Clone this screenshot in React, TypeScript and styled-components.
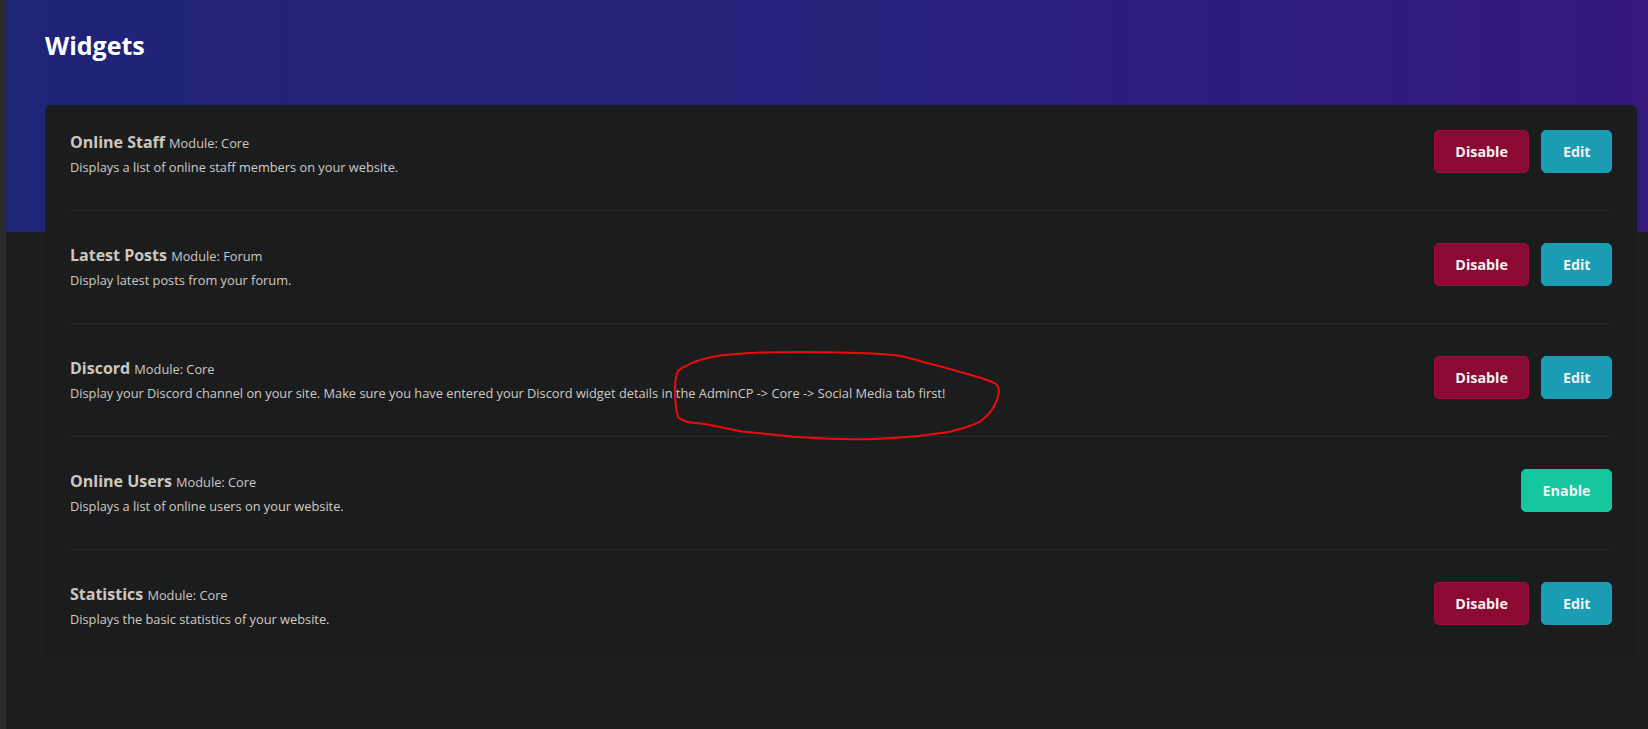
import React from "react";
import styled, { createGlobalStyle } from "styled-components";

const GlobalStyle = createGlobalStyle`
  html, body {
    margin: 0;
    padding: 0;
    background: #1d1e1e;
  }
  body {
    font-family: "Open Sans", "Noto Sans", sans-serif;
  }
  * { box-sizing: border-box; }
`;

const Page = styled.div`
  position: relative;
  display: flex;
  min-height: 729px;
  background: #1d1e1e;
`;

const SideStrip = styled.div`
  width: 6px;
  flex: none;
  background: #2a2c2b;
`;

const Main = styled.main`
  flex: 1;
  display: flex;
  flex-direction: column;
`;

const Hero = styled.header`
  height: 232px;
  padding: 29.6px 11px 0 39px;
  background: linear-gradient(90deg, #1e2477 0%, #27207a 55%, #34187a 100%);
`;

const PageTitle = styled.h1`
  margin: 0;
  font-size: 25px;
  line-height: 30px;
  font-weight: 700;
  color: #ffffff;
`;

const Content = styled.section`
  margin-top: -127px;
  padding: 0 11px 0 39px;
`;

const Card = styled.div`
  background: #1b1c1e;
  border-radius: 6px;
  padding: 24.5px 25px 32px;
`;

const Row = styled.div`
  display: flex;
  align-items: center;
  justify-content: space-between;
`;

const Info = styled.div`
  display: flex;
  flex-direction: column;
`;

const WidgetName = styled.div`
  font-size: 16px;
  line-height: 24px;
  height: 24px;
  font-weight: 700;
  color: #cdc7be;
  margin-bottom: 6.5px;
  white-space: nowrap;
`;

const ModuleTag = styled.span`
  font-size: 12.8px;
  line-height: 1;
  font-weight: 400;
  color: #cdc8c0;
`;

const Description = styled.div`
  font-size: 12.8px;
  line-height: 14px;
  height: 14px;
  color: #d0cbc3;
  white-space: nowrap;
`;

const Actions = styled.div`
  display: flex;
  gap: 12px;
`;

type Variant = "danger" | "info" | "success";

const palette: Record<Variant, { bg: string; border: string }> = {
  danger: { bg: "#8a0a34", border: "#a0103c" },
  info: { bg: "#1a9db2", border: "#1a9db2" },
  success: { bg: "#15c79e", border: "#15c79e" },
};

const Button = styled.button<{ $variant: Variant }>`
  height: 43px;
  padding: 0 20.5px;
  border-radius: 5px;
  border: 1px solid ${(p) => palette[p.$variant].border};
  background: ${(p) => palette[p.$variant].bg};
  color: #f4f1f1;
  font-family: "Open Sans", "Noto Sans", sans-serif;
  font-size: 14.3px;
  font-weight: 700;
  cursor: pointer;
`;

const Divider = styled.hr`
  border: 0;
  height: 1px;
  background: #26272a;
  margin: 36px 0 31.5px;
`;

const Annotation = styled.svg`
  position: absolute;
  left: 0;
  top: 0;
  pointer-events: none;
`;

type Widget = {
  name: string;
  module: string;
  description: string;
  enabled: boolean;
};

const widgets: Widget[] = [
  {
    name: "Online Staff",
    module: "Core",
    description: "Displays a list of online staff members on your website.",
    enabled: true,
  },
  {
    name: "Latest Posts",
    module: "Forum",
    description: "Display latest posts from your forum.",
    enabled: true,
  },
  {
    name: "Discord",
    module: "Core",
    description:
      "Display your Discord channel on your site. Make sure you have entered your Discord widget details in the AdminCP -> Core -> Social Media tab first!",
    enabled: true,
  },
  {
    name: "Online Users",
    module: "Core",
    description: "Displays a list of online users on your website.",
    enabled: false,
  },
  {
    name: "Statistics",
    module: "Core",
    description: "Displays the basic statistics of your website.",
    enabled: true,
  },
];

export default function App() {
  return (
    <>
      <GlobalStyle />
      <Page>
        <SideStrip />
        <Main>
          <Hero>
            <PageTitle>Widgets</PageTitle>
          </Hero>
          <Content>
            <Card>
              {widgets.map((w, i) => (
                <React.Fragment key={w.name}>
                  {i > 0 && <Divider />}
                  <Row>
                    <Info>
                      <WidgetName>
                        {w.name} <ModuleTag>Module: {w.module}</ModuleTag>
                      </WidgetName>
                      <Description>{w.description}</Description>
                    </Info>
                    <Actions>
                      {w.enabled ? (
                        <>
                          <Button $variant="danger">Disable</Button>
                          <Button $variant="info">Edit</Button>
                        </>
                      ) : (
                        <Button $variant="success">Enable</Button>
                      )}
                    </Actions>
                  </Row>
                </React.Fragment>
              ))}
            </Card>
          </Content>
        </Main>
        <Annotation width="1648" height="729" viewBox="0 0 1648 729">
          <path
            d="M686 366 C 700 358, 720 354, 760 352.5 C 800 351.5, 860 352, 893 355 C 910 357, 918 361, 927 363 C 940 366, 950 369, 960 372 C 975 376, 988 379, 996 384 C 1000 387, 999 394, 997 400 C 995 407, 988 416, 980 421.7 C 970 427, 960 429, 950 431.7 C 930 435, 910 437, 893 438 C 870 439.5, 855 439.5, 843 439 C 820 438.5, 805 437.5, 793 436.7 C 775 435, 760 433, 743 431.7 C 730 429, 720 427, 710 425 C 700 423, 692 423, 686.7 421.7 C 682 420, 680 419, 678 417 C 676 410, 675 400, 675 390 C 675 382, 676 375, 678 371 C 680 369, 683 367, 686 366 Z"
            fill="none"
            stroke="#f00a0a"
            strokeWidth="2"
            strokeLinejoin="round"
          />
        </Annotation>
      </Page>
    </>
  );
}
